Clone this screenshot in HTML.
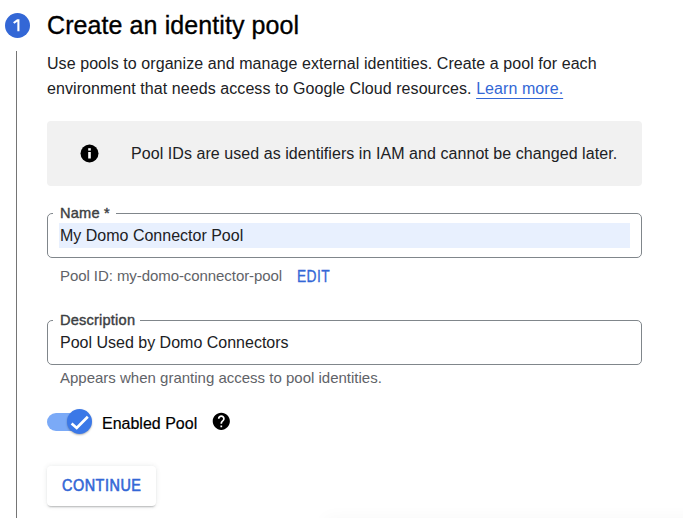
<!DOCTYPE html>
<html>
<head>
<meta charset="utf-8">
<style>
html,body{margin:0;padding:0;background:#fff;}
body{width:683px;height:518px;overflow:hidden;position:relative;font-family:"Liberation Sans",sans-serif;color:#202124;}
.abs{position:absolute;white-space:nowrap;}
.step{position:absolute;left:5px;top:13px;width:25px;height:25px;border-radius:50%;background:#3367d6;color:#fff;font-size:15px;line-height:25px;text-align:center;font-weight:bold;}
.vline{position:absolute;left:16px;top:51px;width:1px;height:467px;background:#757575;}
.title{left:47px;top:0;font-size:25px;line-height:50px;height:50px;-webkit-text-stroke:0.35px #000;color:#000;letter-spacing:0.09px;}
.para{left:47px;top:51px;font-size:16px;line-height:25px;letter-spacing:0.07px;}
.para a{color:#3367d6;text-decoration:underline;text-underline-offset:4px;}
.info{position:absolute;left:47px;top:121px;width:595px;height:65px;background:#f1f1f1;border-radius:4px;}
.field{position:absolute;left:47px;width:593px;height:43px;border:1px solid #80868b;border-radius:5px;}
.label{position:absolute;font-size:14.6px;letter-spacing:0.2px;color:#3c4043;-webkit-text-stroke:0.4px #3c4043;}
.notch{position:absolute;background:#fff;height:4px;}
.help{font-size:15px;color:#5f6368;}
.btn{position:absolute;left:47px;top:466px;width:109px;height:40px;border-radius:4px;background:#fff;box-shadow:0 2px 2px -1px rgba(60,64,67,.35),0 0 5px rgba(60,64,67,.12);}
</style>
</head>
<body>
<div class="step"></div><svg class="abs" style="left:5px;top:13px" width="25" height="25" viewBox="0 0 25 25"><path d="M8.7 10 L12.4 7.3 L13.4 7.3 L13.4 18.3" fill="none" stroke="#fff" stroke-width="2.1" stroke-linejoin="miter"/></svg>
<div class="vline"></div>
<div class="abs title">Create an identity pool</div>
<div class="abs para">Use pools to organize and manage external identities. Create a pool for each<br>environment that needs access to Google Cloud resources. <a>Learn more.</a></div>

<div class="info"></div>
<svg class="abs" style="left:80px;top:144px" width="19" height="19" viewBox="0 0 19 19"><circle cx="9.5" cy="9.5" r="9" fill="#000"/><rect x="8.2" y="8" width="2.6" height="6.5" fill="#fff"/><rect x="8.2" y="4.2" width="2.6" height="2.4" fill="#fff"/></svg>
<div class="abs" style="left:131px;top:142px;font-size:16px;line-height:24px;letter-spacing:0.06px;">Pool IDs are used as identifiers in IAM and cannot be changed later.</div>

<div class="field" style="top:213px;"></div>
<div class="notch" style="left:53px;top:211px;width:63px;"></div><div class="label abs" style="left:60px;top:203.5px;line-height:18px;">Name *</div>
<div class="abs" style="left:59px;top:223px;width:571px;height:25px;background:#e8f0fe;"></div>
<div class="abs" style="left:60px;top:224px;font-size:16px;line-height:24px;">My Domo Connector Pool</div>
<div class="abs help" style="left:60px;top:265px;line-height:22px;letter-spacing:-0.07px;">Pool ID: my-domo-connector-pool</div>
<div class="abs" style="left:297px;top:266px;line-height:22px;font-size:16px;color:#3367d6;-webkit-text-stroke:0.3px #3367d6;letter-spacing:0.5px;transform:scaleX(0.86);transform-origin:0 0;">EDIT</div>

<div class="field" style="top:320px;"></div>
<div class="notch" style="left:53px;top:318px;width:87px;"></div><div class="label abs" style="left:60px;top:310.5px;line-height:18px;">Description</div>
<div class="abs" style="left:60px;top:331px;font-size:16px;line-height:24px;">Pool Used by Domo Connectors</div>
<div class="abs help" style="left:60px;top:367px;line-height:22px;">Appears when granting access to pool identities.</div>

<div class="abs" style="left:47px;top:413px;width:40px;height:18px;border-radius:9px;background:#7baaf7;"></div>
<div class="abs" style="left:67.2px;top:409.4px;width:25px;height:25px;border-radius:50%;background:#3b78e7;box-shadow:0 1px 2px rgba(0,0,0,.3);"></div>
<svg class="abs" style="left:67.5px;top:409.5px" width="25" height="25" viewBox="0 0 25 25"><path d="M3.6 13.4 L8.7 17.9 L19.8 6.7" fill="none" stroke="#fff" stroke-width="2.7"/></svg>
<div class="abs" style="left:102px;top:412px;font-size:16px;line-height:24px;-webkit-text-stroke:0.2px #000;color:#000;">Enabled Pool</div>
<svg class="abs" style="left:211.3px;top:411.3px" width="20.6" height="20.6" viewBox="0 0 24 24"><path fill="#000" d="M12 2C6.48 2 2 6.48 2 12s4.48 10 10 10 10-4.48 10-10S17.52 2 12 2zm1 17h-2v-2h2v2zm2.07-7.75l-.9.92C13.45 12.9 13 13.5 13 15h-2v-.5c0-1.1.45-2.1 1.17-2.83l1.24-1.26c.37-.36.59-.86.59-1.41 0-1.1-.9-2-2-2s-2 .9-2 2H8c0-2.21 1.79-4 4-4s4 1.79 4 4c0 .88-.36 1.68-.93 2.25z"/></svg>

<div class="btn"></div>
<div class="abs" style="left:62px;top:474px;font-size:16px;line-height:24px;color:#3367d6;-webkit-text-stroke:0.6px #3367d6;letter-spacing:0.6px;transform:scaleX(0.9);transform-origin:0 0;">CONTINUE</div>
<div style="position:absolute;left:325px;top:520px;width:440px;height:60px;background:#fff;box-shadow:0 -2px 16px rgba(0,0,0,0.035);"></div>
</body>
</html>
